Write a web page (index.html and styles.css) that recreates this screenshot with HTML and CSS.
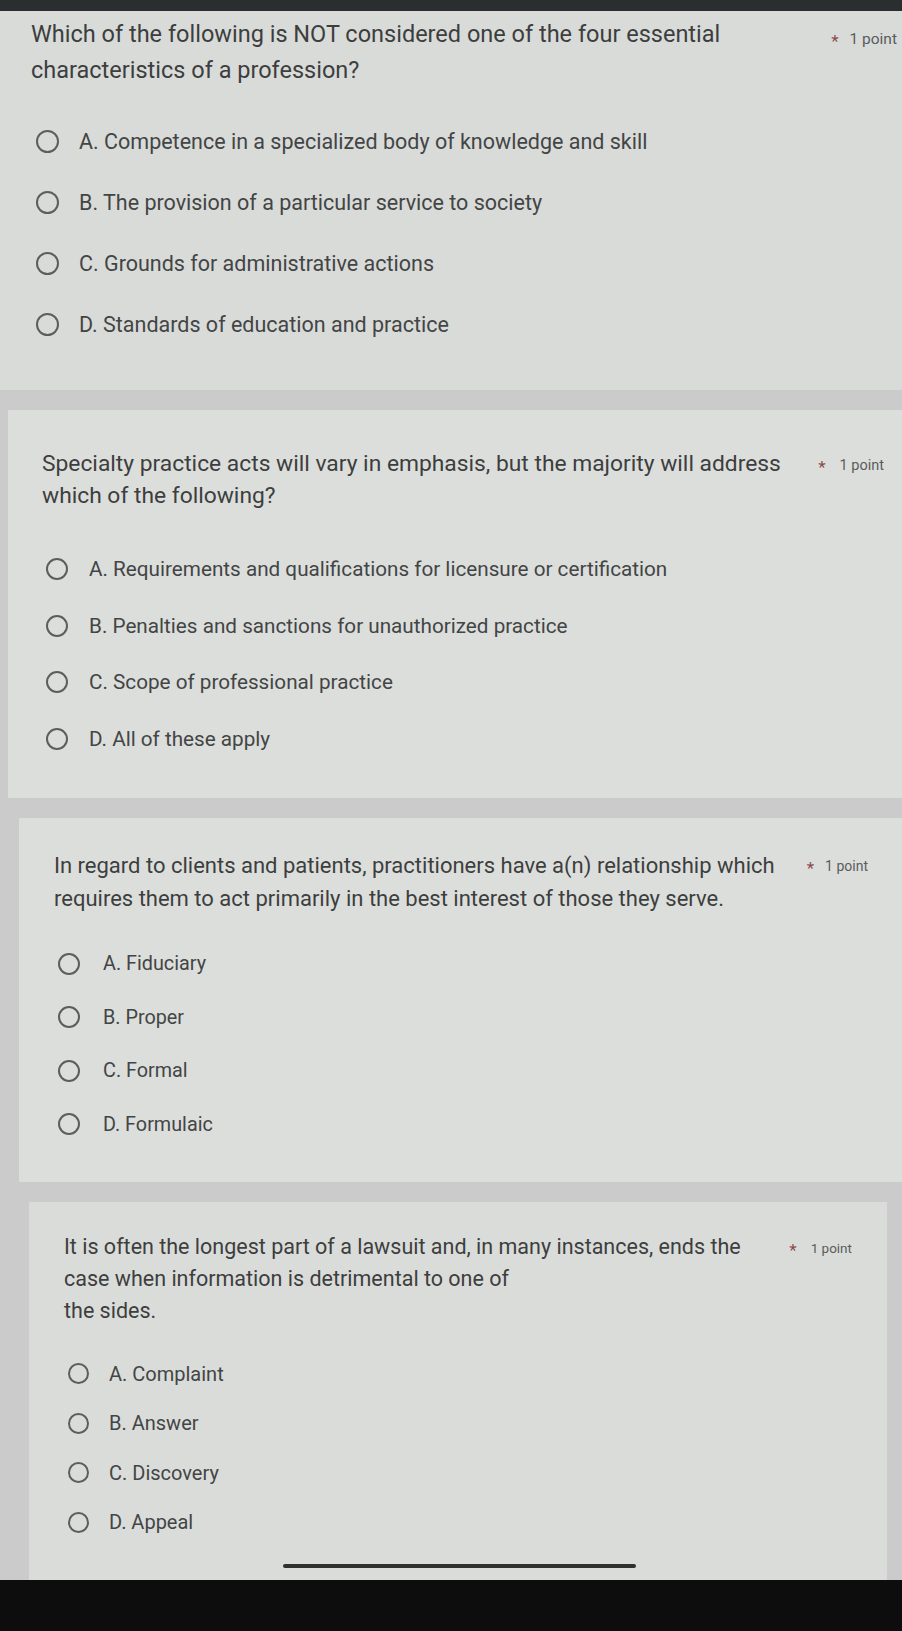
FILE: index.html
```html
<!DOCTYPE html>
<html lang="en">
<head>
<meta charset="utf-8">
<title>Quiz</title>
<link rel="stylesheet" href="styles.css">
</head>
<body>
<div class="topbar"></div>
<main class="form">
  <section class="card card-1">
    <div class="qhead">
      <div class="qtext">Which of the following is NOT considered one of the four essential<br>characteristics of a profession?</div>
      <div class="pts"><span class="star">*</span>1 point</div>
    </div>
    <ul class="opts">
      <li class="opt"><span class="radio"></span><span>A. Competence in a specialized body of knowledge and skill</span></li>
      <li class="opt"><span class="radio"></span><span>B. The provision of a particular service to society</span></li>
      <li class="opt"><span class="radio"></span><span>C. Grounds for administrative actions</span></li>
      <li class="opt"><span class="radio"></span><span>D. Standards of education and practice</span></li>
    </ul>
  </section>
  <section class="card card-2">
    <div class="qhead">
      <div class="qtext">Specialty practice acts will vary in emphasis, but the majority will address<br>which of the following?</div>
      <div class="pts"><span class="star">*</span>1 point</div>
    </div>
    <ul class="opts">
      <li class="opt"><span class="radio"></span><span>A. Requirements and qualifications for licensure or certification</span></li>
      <li class="opt"><span class="radio"></span><span>B. Penalties and sanctions for unauthorized practice</span></li>
      <li class="opt"><span class="radio"></span><span>C. Scope of professional practice</span></li>
      <li class="opt"><span class="radio"></span><span>D. All of these apply</span></li>
    </ul>
  </section>
  <section class="card card-3">
    <div class="qhead">
      <div class="qtext">In regard to clients and patients, practitioners have a(n) relationship which<br>requires them to act primarily in the best interest of those they serve.</div>
      <div class="pts"><span class="star">*</span>1 point</div>
    </div>
    <ul class="opts">
      <li class="opt"><span class="radio"></span><span>A. Fiduciary</span></li>
      <li class="opt"><span class="radio"></span><span>B. Proper</span></li>
      <li class="opt"><span class="radio"></span><span>C. Formal</span></li>
      <li class="opt"><span class="radio"></span><span>D. Formulaic</span></li>
    </ul>
  </section>
  <section class="card card-4">
    <div class="qhead">
      <div class="qtext">It is often the longest part of a lawsuit and, in many instances, ends the<br>case when information is detrimental to one of<br>the sides.</div>
      <div class="pts"><span class="star">*</span>1 point</div>
    </div>
    <ul class="opts">
      <li class="opt"><span class="radio"></span><span>A. Complaint</span></li>
      <li class="opt"><span class="radio"></span><span>B. Answer</span></li>
      <li class="opt"><span class="radio"></span><span>C. Discovery</span></li>
      <li class="opt"><span class="radio"></span><span>D. Appeal</span></li>
    </ul>
    <div class="homebar"></div>
  </section>
</main>
<div class="bottombar"></div>
</body>
</html>
```

FILE: styles.css
```css
* { box-sizing: border-box; }
html, body {
  margin: 0;
  padding: 0;
}
body {
  width: 902px;
  height: 1631px;
  overflow: hidden;
  background: #cacbca;
  font-family: Roboto, "Noto Sans", "Liberation Sans", sans-serif;
  color: #3d3e3e;
}
.topbar {
  height: 11px;
  background: #2b2e31;
}
.form {
  display: flex;
  flex-direction: column;
  gap: 20px;
}
.card {
  background: #dcdedc;
}
.qhead {
  display: flex;
  justify-content: space-between;
  align-items: flex-start;
}
.qtext {
  font-weight: 400;
  white-space: nowrap;
  flex: none;
}
.pts {
  display: flex;
  align-items: center;
  gap: 11px;
  font-size: 14px;
  color: #5a5c5c;
  white-space: nowrap;
}
.star {
  color: #8a4c4c;
  font-size: 17px;
  position: relative;
  top: 2px;
}
.opts {
  list-style: none;
  margin: 0;
  padding: 0;
  display: flex;
  flex-direction: column;
}
.opt {
  display: flex;
  align-items: center;
  color: #434545;
}
.radio {
  flex: none;
  border: 2px solid #5c5e5e;
  border-radius: 50%;
}

/* card 1 */
.card-1 {
  height: 379px;
  padding: 5px 5px 0 31px;
  background: #d9dbd9;
}
.card-1 .qtext { font-size: 23.5px; line-height: 36px; }
.card-1 .pts { margin-top: 13px; font-size: 15.5px; }
.card-1 .opts { margin-top: 23px; }
.card-1 .opt { height: 61px; font-size: 21.5px; }
.card-1 .radio { width: 23px; height: 23px; margin-left: 5px; margin-right: 20px; }

/* card 2 */
.card-2 {
  height: 388px;
  margin-left: 8px;
  padding: 38px 18px 0 34px;
}
.card-2 .qtext { font-size: 22.8px; line-height: 32px; }
.card-2 .pts { margin-top: 7px; font-size: 14.5px; gap: 14px; }
.card-2 .opts { margin-top: 29px; }
.card-2 .opt { height: 56.5px; font-size: 20.7px; }
.card-2 .radio { width: 22px; height: 22px; margin-left: 4px; margin-right: 21px; }

/* card 3 */
.card-3 {
  height: 364px;
  margin-left: 19px;
  padding: 31px 34px 0 35px;
}
.card-3 .qtext { font-size: 22px; line-height: 33px; }
.card-3 .pts { margin-top: 7px; font-size: 14px; }
.card-3 .opts { margin-top: 22px; }
.card-3 .opt { height: 53.5px; font-size: 19.8px; }
.card-3 .radio { width: 22px; height: 22px; margin-left: 4px; margin-right: 23px; }

/* card 4 */
.card-4 {
  position: relative;
  height: 378px;
  margin-left: 29px;
  margin-right: 15px;
  padding: 29px 35px 0 35px;
  background: #dadcda;
}
.card-4 .qtext { font-size: 21.5px; line-height: 32px; }
.card-4 .pts { margin-top: 7px; font-size: 13.5px; gap: 14px; }
.card-4 .opts { margin-top: 22px; }
.card-4 .opt { height: 49.5px; font-size: 20px; }
.card-4 .radio { width: 21px; height: 21px; margin-left: 4px; margin-right: 20px; }

.homebar {
  position: absolute;
  left: 254px;
  top: 362px;
  width: 353px;
  height: 4px;
  border-radius: 2px;
  background: #2f3030;
}
.bottombar {
  height: 60px;
  background: #0d0d0e;
}
```
